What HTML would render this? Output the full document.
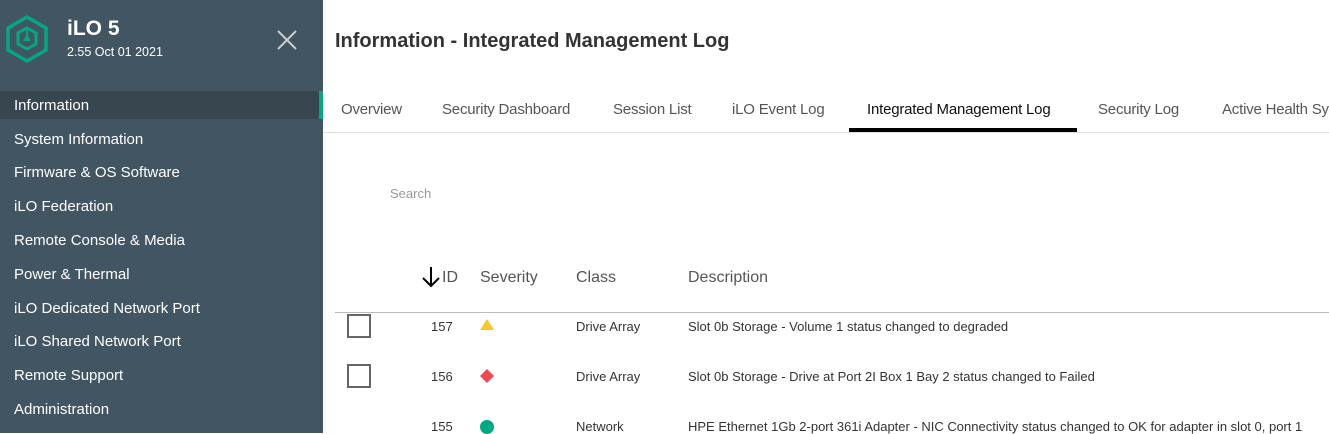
<!DOCTYPE html>
<html><head><style>
*{margin:0;padding:0;box-sizing:border-box}
body{width:1329px;height:433px;overflow:hidden;font-family:"Liberation Sans",sans-serif;background:#fff;position:relative}
.sb{position:absolute;left:0;top:0;width:323px;height:433px;background:#425563;color:#fff}
.sb .t{position:absolute;left:67px;top:17px;font-size:21px;font-weight:bold}
.sb .v{position:absolute;left:67px;top:45px;font-size:12.5px}
.nav{position:absolute;left:0;font-size:15px;width:323px;padding-left:14px;height:28px;line-height:30px}
.act{background:#37464f;border-right:4px solid #01a982}
.a{position:absolute;white-space:nowrap;color:#333}
.tab{position:absolute;top:101px;font-size:15px;color:#555;white-space:nowrap;letter-spacing:-0.2px}
.cb{position:absolute;left:347px;width:24px;height:24px;border:2px solid #666}
.r{position:absolute;font-size:13px;color:#333;white-space:nowrap}
</style></head><body>
<div class="sb">
<svg style="position:absolute;left:5px;top:15px" width="44" height="48" viewBox="0 0 44 48"><polygon points="22,2 41,13 41,35 22,46 3,35 3,13" fill="none" stroke="#01a982" stroke-width="3.5"/><polygon points="22,13 31,18 31,29 22,34 13,29 13,18" fill="none" stroke="#01a982" stroke-width="3"/><polygon points="22,19 26,26 18,26" fill="#01a982"/><line x1="22" y1="13" x2="22" y2="23" stroke="#01a982" stroke-width="2"/></svg>
<div class="t">iLO 5</div><div class="v">2.55 Oct 01 2021</div>
<svg style="position:absolute;left:277px;top:30px" width="20" height="20"><path d="M1 1L19 19M19 1L1 19" stroke="#ccc" stroke-width="2"/></svg>
<div class="nav act" style="top:91px">Information</div>
<div class="nav" style="top:125px">System Information</div>
<div class="nav" style="top:158px">Firmware &amp; OS Software</div>
<div class="nav" style="top:192px">iLO Federation</div>
<div class="nav" style="top:226px">Remote Console &amp; Media</div>
<div class="nav" style="top:260px">Power &amp; Thermal</div>
<div class="nav" style="top:294px">iLO Dedicated Network Port</div>
<div class="nav" style="top:327px">iLO Shared Network Port</div>
<div class="nav" style="top:361px">Remote Support</div>
<div class="nav" style="top:395px">Administration</div>
</div>
<div class="a" style="left:335px;top:30px;font-size:20px;font-weight:bold">Information - Integrated Management Log</div>
<div class="tab" style="left:341px">Overview</div>
<div class="tab" style="left:442px">Security Dashboard</div>
<div class="tab" style="left:613px">Session List</div>
<div class="tab" style="left:732px">iLO Event Log</div>
<div class="tab" style="left:867px;color:#111">Integrated Management Log</div>
<div class="tab" style="left:1098px">Security Log</div>
<div class="tab" style="left:1222px">Active Health System Log</div>
<div style="position:absolute;left:849px;top:128px;width:228px;height:4px;background:#000"></div>
<div style="position:absolute;left:323px;top:132px;width:1006px;height:1px;background:#ddd"></div>
<div class="a" style="left:390px;top:186px;font-size:13px;color:#999">Search</div>
<svg style="position:absolute;left:421px;top:266px" width="20" height="22"><path d="M10 1V20M2 12L10 20L18 12" fill="none" stroke="#000" stroke-width="2"/></svg>
<div class="a" style="left:442px;top:269px;font-size:16px;color:#555">ID</div>
<div class="a" style="left:480px;top:269px;font-size:16px;color:#555">Severity</div>
<div class="a" style="left:576px;top:269px;font-size:16px;color:#555">Class</div>
<div class="a" style="left:688px;top:269px;font-size:16px;color:#555">Description</div>
<div style="position:absolute;left:335px;top:312px;width:994px;height:1px;background:#bbb"></div>
<div class="cb" style="top:314px"></div><div class="cb" style="top:364px"></div>
<div class="r" style="left:431px;top:319px">157</div>
<svg style="position:absolute;left:480px;top:319px" width="14" height="12"><polygon points="7,0 14,11 0,11" fill="#ffc627"/></svg>
<div class="r" style="left:576px;top:319px">Drive Array</div>
<div class="r" style="left:688px;top:319px">Slot 0b Storage - Volume 1 status changed to degraded</div>
<div class="r" style="left:431px;top:369px">156</div>
<svg style="position:absolute;left:480px;top:369px" width="14" height="14"><polygon points="7,0 14,7 7,14 0,7" fill="#f04953"/></svg>
<div class="r" style="left:576px;top:369px">Drive Array</div>
<div class="r" style="left:688px;top:369px">Slot 0b Storage - Drive at Port 2I Box 1 Bay 2 status changed to Failed</div>
<div class="r" style="left:431px;top:419px">155</div>
<div style="position:absolute;left:480px;top:420px;width:14px;height:14px;border-radius:50%;background:#01a982"></div>
<div class="r" style="left:576px;top:419px">Network</div>
<div class="r" style="left:688px;top:419px">HPE Ethernet 1Gb 2-port 361i Adapter - NIC Connectivity status changed to OK for adapter in slot 0, port 1</div>
</body></html>
